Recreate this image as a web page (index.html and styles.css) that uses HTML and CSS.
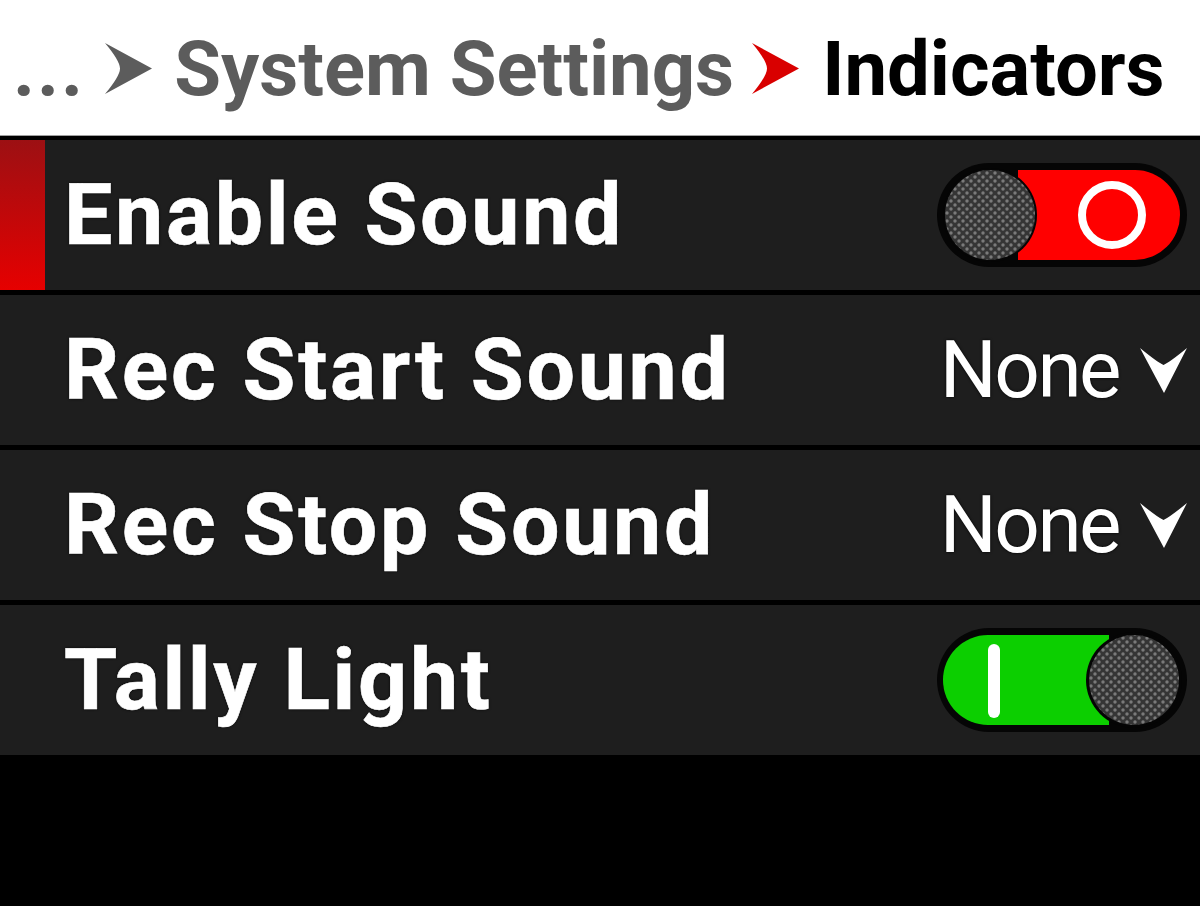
FILE: index.html
```html
<!DOCTYPE html>
<html>
<head>
<meta charset="utf-8">
<link rel="stylesheet" href="styles.css">
</head>
<body>
<svg width="0" height="0" class="defs">
  <defs>
    <pattern id="dots" width="8" height="8" patternUnits="userSpaceOnUse">
      <rect width="8" height="8" fill="#353535"/>
      <circle cx="2" cy="2" r="1.7" fill="#7a7a7a"/>
      <circle cx="6" cy="6" r="1.7" fill="#7a7a7a"/>
    </pattern>
  </defs>
</svg>
<div class="screen">
  <header class="crumbs">
    <span class="ellipsis">...</span>
    <svg class="chev" viewBox="0 0 47 51"><path d="M0 0 L47 25.5 L0 51 Q15 33 15 25.5 Q15 18 0 0 Z" fill="#5c5c5c"/></svg>
    <span class="crumb">System Settings</span>
    <svg class="chev red" viewBox="0 0 47 51"><path d="M0 0 L47 25.5 L0 51 Q15 33 15 25.5 Q15 18 0 0 Z" fill="#d90000"/></svg>
    <span class="current">Indicators</span>
  </header>
  <div class="rule"></div>
  <div class="list">
    <div class="row selected">
      <div class="marker"></div>
      <div class="label">Enable Sound</div>
      <svg class="toggle" viewBox="0 0 250 104">
        <rect x="0" y="0" width="250" height="104" rx="52" fill="#050505"/>
        <path d="M81 7 H198 A45 45 0 0 1 198 97 H81 Z" fill="#ff0000"/>
        <circle cx="53" cy="52" r="47" fill="#050505"/>
        <circle cx="53" cy="52" r="45" fill="url(#dots)"/>
        <circle cx="175" cy="52" r="30" fill="none" stroke="#ffffff" stroke-width="8"/>
      </svg>
    </div>
    <div class="row">
      <div class="marker"></div>
      <div class="label">Rec Start Sound</div>
      <div class="value">None<svg class="down" viewBox="0 0 47 45"><path d="M0 0 Q17 14 23.5 17 Q30 14 47 0 L24 45 Z" fill="#ffffff"/></svg></div>
    </div>
    <div class="row">
      <div class="marker"></div>
      <div class="label">Rec Stop Sound</div>
      <div class="value">None<svg class="down" viewBox="0 0 47 45"><path d="M0 0 Q17 14 23.5 17 Q30 14 47 0 L24 45 Z" fill="#ffffff"/></svg></div>
    </div>
    <div class="row">
      <div class="marker"></div>
      <div class="label">Tally Light</div>
      <svg class="toggle" viewBox="0 0 250 104">
        <rect x="0" y="0" width="250" height="104" rx="52" fill="#050505"/>
        <path d="M51 7 H172 V97 H51 A45 45 0 0 1 51 7 Z" fill="#0ccf00"/>
        <circle cx="197" cy="52" r="48" fill="#050505"/>
        <circle cx="197" cy="52" r="45" fill="url(#dots)"/>
        <rect x="51" y="16" width="12" height="74" rx="6" fill="#ffffff"/>
      </svg>
    </div>
  </div>
</div>
</body>
</html>
```

FILE: styles.css
```css
* { box-sizing: border-box; }
html, body { margin: 0; padding: 0; background: #000; }
body { width: 1200px; height: 906px; overflow: hidden; font-family: Roboto, "Liberation Sans", sans-serif; }
.defs { position: absolute; }
.screen { width: 1200px; height: 906px; background: #000; display: flex; flex-direction: column; }

.crumbs {
  height: 135px;
  background: #fff;
  display: flex;
  align-items: center;
  padding: 2px 0 0 13px;
  font-weight: 700;
  font-size: 76px;
  line-height: 1;
  white-space: nowrap;
}
.ellipsis { color: #5c5c5c; letter-spacing: 2px; }
.chev { width: 47px; height: 51px; margin: 0 22px 0 20px; flex: none; }
.chev.red { margin: 0 23px 0 18px; }
.crumb { color: #5c5c5c; }
.current { color: #000; }

.rule { height: 5px; border-top: 1px solid #a0a0a0; background: #000; }

.list { display: flex; flex-direction: column; gap: 5px; }
.row {
  height: 150px;
  background: #1e1e1e;
  display: flex;
  align-items: center;
  padding-right: 13px;
}
.marker { width: 45px; align-self: stretch; flex: none; }
.row.selected .marker { background: linear-gradient(#9c1013, #e60000); }
.label {
  margin-left: 19px;
  flex: 1;
  color: #fff;
  font-weight: 700;
  font-size: 86px;
  line-height: 1;
  letter-spacing: 2.7px;
  -webkit-text-stroke: 0.6px #fff;
  text-shadow: 0 0 3px #000;
}
.toggle { width: 250px; height: 104px; flex: none; }
.value {
  display: flex;
  align-items: center;
  gap: 21px;
  color: #fff;
  font-size: 80px;
  line-height: 1;
  font-weight: 400;
  letter-spacing: -2.5px;
  text-shadow: 0 0 3px #000;
}
.down { width: 47px; height: 45px; }
```
